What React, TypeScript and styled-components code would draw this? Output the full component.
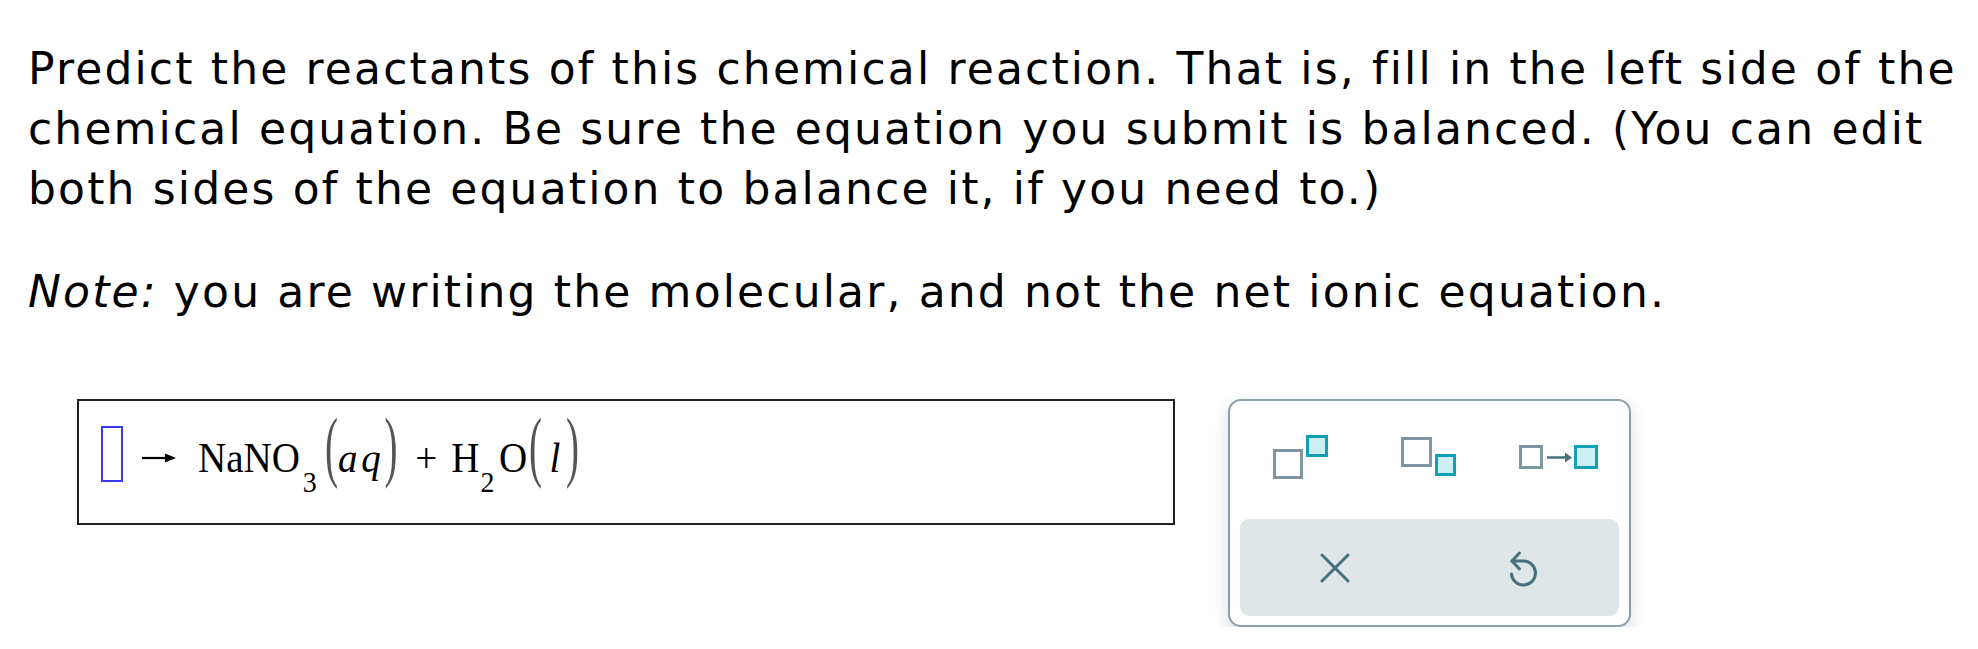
import React from "react";
import styled, { createGlobalStyle } from "styled-components";

const Global = createGlobalStyle`
  html, body { margin: 0; padding: 0; background: #ffffff; }
  body { font-family: "DejaVu Sans", Verdana, sans-serif; color: #000; }
`;

const Page = styled.div`
  padding: 39px 0 0 28px;
  width: 1950px;
`;

const Para = styled.p<{ $top?: number }>`
  margin: ${(p) => p.$top ?? 0}px 0 0 0;
  font-size: 44px;
  line-height: 60px;
  letter-spacing: 2.15px;
  white-space: nowrap;
`;

const Row = styled.div`
  display: flex;
  align-items: flex-start;
  gap: 53px;
  margin-top: 77px;
  margin-left: 49px;
`;

const EqBox = styled.div`
  box-sizing: border-box;
  width: 1098px;
  height: 126px;
  border: 2px solid #222;
  display: flex;
  align-items: flex-start;
  padding: 25px 0 0 22px;
`;

const Slot = styled.div`
  box-sizing: border-box;
  width: 22px;
  height: 56px;
  border: 2px solid #3b3bf5;
  flex: none;
`;

const ArrowSvg = styled.svg`
  margin: 27px 0 0 19px;
  flex: none;
`;

const Formula = styled.div`
  margin: 4px 0 0 22px;
  font-family: "Liberation Serif", "Times New Roman", serif;
  font-size: 42px;
  line-height: 56px;
  display: flex;
  align-items: baseline;
  white-space: nowrap;
  transform: scaleX(0.93);
  transform-origin: 0 50%;
`;

const Sym = styled.span<{ $ls?: number; $ml?: number }>`
  letter-spacing: ${(p) => p.$ls ?? 0}px;
  margin-left: ${(p) => p.$ml ?? 0}px;
`;

const Sub = styled.span<{ $ml?: number }>`
  font-size: 30px;
  position: relative;
  top: 20px;
  margin-left: ${(p) => p.$ml ?? 0}px;
`;

const Paren = styled.span<{ $ml?: number }>`
  display: inline-block;
  color: #555;
  font-size: 42px;
  line-height: 42px;
  transform: translateY(-9px) scaleY(1.85);
  transform-origin: 50% 59%;
  margin-left: ${(p) => p.$ml ?? 0}px;
`;

const Ital = styled.span<{ $ml?: number; $ls?: number }>`
  font-style: italic;
  letter-spacing: ${(p) => p.$ls ?? 0}px;
  margin-left: ${(p) => p.$ml ?? 0}px;
`;

const Panel = styled.div`
  box-sizing: border-box;
  width: 403px;
  height: 228px;
  border: 2px solid #8ca2ab;
  border-radius: 13px;
  background: #fff;
  box-shadow: 0 6px 16px rgba(40, 60, 70, 0.18);
  padding: 6px 10px 9px 10px;
  display: flex;
  flex-direction: column;
  gap: 12px;
`;

const IconRow = styled.div`
  display: grid;
  grid-template-columns: repeat(3, 1fr);
  height: 100px;
  align-items: center;
  justify-items: center;
`;

const IconBtn = styled.div<{ $dx?: number }>`
  display: flex;
  align-items: center;
  justify-content: center;
  margin-left: ${(p) => p.$dx ?? 0}px;
`;

const ActionBar = styled.div`
  height: 97px;
  border-radius: 9px;
  background: #dfe6e8;
  display: grid;
  grid-template-columns: 1fr 1fr;
  align-items: center;
  justify-items: center;
`;

const GRAY = "#7d969f";
const TEAL = "#12a0b6";
const LIGHT = "#cdeef3";
const DARK = "#47707e";

export default function App() {
  return (
    <>
      <Global />
      <Page>
        <Para>
          Predict the reactants of this chemical reaction. That is, fill in the left side of the
          <br />
          chemical equation. Be sure the equation you submit is balanced. (You can edit
          <br />
          both sides of the equation to balance it, if you need to.)
        </Para>
        <Para $top={43}>
          <i>Note:</i> you are writing the molecular, and not the net ionic equation.
        </Para>
        <Row>
          <EqBox>
            <Slot />
            <ArrowSvg width="34" height="10" viewBox="0 0 34 10">
              <line x1="0" y1="5" x2="26" y2="5" stroke="#000" strokeWidth="2.2" />
              <path d="M23 0.5 L34 5 L23 9.5 Z" fill="#000" />
            </ArrowSvg>
            <Formula>
              <Sym $ls={0}>NaNO</Sym>
              <Sub $ml={3}>3</Sub>
              <Paren $ml={9}>(</Paren>
              <Ital $ls={4}>aq</Ital>
              <Paren>)</Paren>
              <Sym $ml={19}>+</Sym>
              <Sym $ml={15}>H</Sym>
              <Sub $ml={1}>2</Sub>
              <Sym $ml={5}>O</Sym>
              <Paren $ml={2}>(</Paren>
              <Ital $ml={8}>l</Ital>
              <Paren $ml={6}>)</Paren>
            </Formula>
          </EqBox>
          <Panel>
            <IconRow>
              <IconBtn $dx={-4}>
                <svg width="56" height="46" viewBox="0 0 56 46">
                  <rect x="1.5" y="16.5" width="27" height="27" fill="#fff" stroke={GRAY} strokeWidth="3" />
                  <rect x="34.5" y="2.5" width="19" height="19" fill={LIGHT} stroke={TEAL} strokeWidth="3" />
                </svg>
              </IconBtn>
              <IconBtn>
                <svg width="56" height="40" viewBox="0 0 56 40">
                  <rect x="1.5" y="1.5" width="28" height="27" fill="#fff" stroke={GRAY} strokeWidth="3" />
                  <rect x="35.5" y="18.5" width="18" height="19" fill={LIGHT} stroke={TEAL} strokeWidth="3" />
                </svg>
              </IconBtn>
              <IconBtn $dx={6}>
                <svg width="80" height="25" viewBox="0 0 80 25">
                  <rect x="1.5" y="1.5" width="21" height="21" fill="#fff" stroke={GRAY} strokeWidth="3" />
                  <line x1="28" y1="12.5" x2="47" y2="12.5" stroke={DARK} strokeWidth="2.5" />
                  <path d="M46 7.5 L53 12.5 L46 17.5 Z" fill={DARK} />
                  <rect x="56.5" y="1.5" width="21" height="21" fill={LIGHT} stroke={TEAL} strokeWidth="3" />
                </svg>
              </IconBtn>
            </IconRow>
            <ActionBar>
              <svg width="30" height="30" viewBox="0 0 30 30">
                <path d="M2 2 L28 28 M28 2 L2 28" stroke={DARK} strokeWidth="3" strokeLinecap="round" fill="none" />
              </svg>
              <svg width="34" height="40" viewBox="0 0 34 40">
                <path
                  d="M5 13 H16 A12 12 0 1 1 4.5 26"
                  stroke={DARK}
                  strokeWidth="3"
                  strokeLinecap="round"
                  fill="none"
                />
                <path
                  d="M12.5 5 L5 13 L12.5 21"
                  stroke={DARK}
                  strokeWidth="3"
                  strokeLinecap="round"
                  strokeLinejoin="round"
                  fill="none"
                />
              </svg>
            </ActionBar>
          </Panel>
        </Row>
      </Page>
    </>
  );
}
